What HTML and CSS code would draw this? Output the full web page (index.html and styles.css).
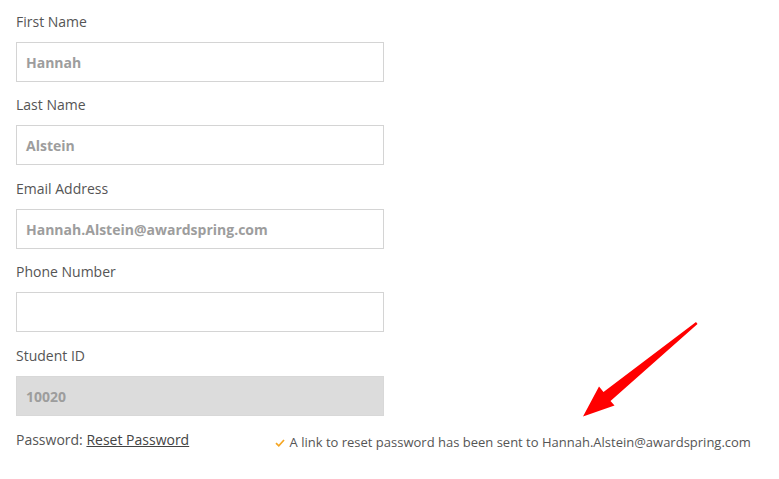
FILE: index.html
```html
<!DOCTYPE html>
<html>
<head>
<meta charset="utf-8">
<link rel="stylesheet" href="styles.css">
</head>
<body>
<div class="page">
  <form class="profile">
    <div class="field">
      <label class="label">First Name</label>
      <div class="input">Hannah</div>
    </div>
    <div class="field">
      <label class="label">Last Name</label>
      <div class="input">Alstein</div>
    </div>
    <div class="field">
      <label class="label">Email Address</label>
      <div class="input">Hannah.Alstein@awardspring.com</div>
    </div>
    <div class="field">
      <label class="label">Phone Number</label>
      <div class="input"></div>
    </div>
    <div class="field">
      <label class="label">Student ID</label>
      <div class="input disabled">10020</div>
    </div>
    <div class="password-row">
      <span class="pw-label">Password: <a class="reset-link" href="#">Reset Password</a></span>
      <span class="notice">
        <svg class="check" width="10" height="8" viewBox="0 0 10 8"><path d="M1 4.2 L3.8 6.8 L9 1" fill="none" stroke="#f5a623" stroke-width="1.7"/></svg>
        A link to reset password has been sent to Hannah.Alstein@awardspring.com
      </span>
    </div>
  </form>
  <svg class="arrow" width="779" height="479" viewBox="0 0 779 479">
    <path d="M696 322 L697.5 324 L610.5 401 L614.5 405.5 L583 416.5 L599 386.5 L603.5 392 Z" fill="#ff0000"/>
  </svg>
</div>
</body>
</html>
```

FILE: styles.css
```css
html, body {
  margin: 0;
  padding: 0;
  background: #ffffff;
}
.page {
  position: relative;
  width: 779px;
  height: 479px;
  overflow: hidden;
  font-family: "Open Sans", "Liberation Sans", sans-serif;
}
.profile {
  display: flex;
  flex-direction: column;
  padding: 12px 0 0 16px;
  width: 368px;
}
.field {
  display: flex;
  flex-direction: column;
  margin-bottom: 13px;
}
.field:nth-child(even) {
  margin-bottom: 14px;
}
.label {
  font-size: 14px;
  line-height: 20px;
  color: #555555;
  margin-bottom: 10px;
}
.input {
  box-sizing: border-box;
  height: 40px;
  width: 368px;
  border: 1px solid #d4d4d4;
  background: #ffffff;
  padding: 0 9px;
  display: flex;
  align-items: center;
  font-size: 14px;
  font-weight: 700;
  color: #9d9d9d;
}
.input.disabled {
  background: #dcdcdc;
  border-color: #d8d8d8;
}
.password-row {
  display: flex;
  align-items: baseline;
  white-space: nowrap;
  margin-top: 1px;
}
.pw-label {
  font-size: 14px;
  line-height: 20px;
  color: #555555;
}
.reset-link {
  color: #444444;
  text-decoration: underline;
}
.notice {
  margin-left: 86px;
  font-size: 13px;
  line-height: 20px;
  color: #555555;
  position: relative;
  top: 2px;
}
.check {
  margin-right: 1px;
  vertical-align: 0;
}
.arrow {
  position: absolute;
  left: 0;
  top: 0;
  pointer-events: none;
}
```
